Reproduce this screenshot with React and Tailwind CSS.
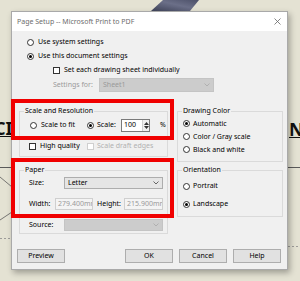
import React from "react";

const Radio = ({ checked }) => (
  <span className="flex h-[7px] w-[7px] shrink-0 items-center justify-center rounded-full border border-[#333] bg-white">
    {checked && <span className="h-[3px] w-[3px] rounded-full bg-black" />}
  </span>
);

const Check = ({ disabled }) => (
  <span
    className={
      "block h-[7px] w-[7px] shrink-0 border bg-white " +
      (disabled ? "border-[#cfcfcf]" : "border-[#333]")
    }
  />
);

const Chevron = ({ color = "#333" }) => (
  <svg width="6" height="4" viewBox="0 0 6 4" className="shrink-0">
    <path d="M0.5 0.5 L3 3 L5.5 0.5" fill="none" stroke={color} strokeWidth="0.8" />
  </svg>
);

const Select = ({ value, width, disabled, height = "h-[12px]" }) => (
  <div
    className={
      "flex items-center justify-between border pl-[3px] pr-[3px] " +
      height +
      " " +
      width +
      " " +
      (disabled ? "border-[#c4c4c4] bg-[#cccccc] text-[#9a9a9a]" : "border-[#adadad] bg-[#e5e5e5] text-black")
    }
  >
    <span>{value}</span>
    <Chevron color={disabled ? "#a8a8a8" : "#444"} />
  </div>
);

const Field = ({ value, width }) => (
  <div
    className={
      "flex h-[12px] items-center overflow-hidden whitespace-nowrap border border-[#cfcfcf] bg-[#f4f4f4] pl-[2px] text-[#9a9a9a] " +
      width
    }
  >
    {value}
  </div>
);

const Group = ({ title, className, children }) => (
  <fieldset className={"border border-[#dadada] " + className}>
    <legend className="ml-[4px] px-[1px] leading-[10px]">{title}</legend>
    {children}
  </fieldset>
);

const Button = ({ children }) => (
  <div className="flex h-[14px] w-[48px] items-center justify-center border border-[#adadad] bg-[#e1e1e1]">
    {children}
  </div>
);

const Backdrop = () => (
  <>
    <svg className="absolute left-0 top-0" width="300" height="281" viewBox="0 0 300 281">
      <defs>
        <linearGradient id="slate" x1="0" y1="1" x2="1" y2="0">
          <stop offset="0" stopColor="#3f4359" />
          <stop offset="0.55" stopColor="#6b6f88" />
          <stop offset="1" stopColor="#4c5068" />
        </linearGradient>
      </defs>
      <polygon points="163,0 199,0 190,11 151,11" fill="url(#slate)" />
      <line x1="0" y1="167.5" x2="12" y2="167.5" stroke="#5a5a5a" strokeWidth="1" />
      <line x1="0" y1="177" x2="12" y2="187" stroke="#5a5a5a" strokeWidth="0.8" />
      <line x1="0" y1="220" x2="12" y2="212" stroke="#5a5a5a" strokeWidth="0.8" />
      <line x1="0" y1="238.5" x2="12" y2="238.5" stroke="#8a8a8a" strokeWidth="0.8" strokeDasharray="2 2" />
      <line x1="288" y1="167.5" x2="300" y2="167.5" stroke="#5a5a5a" strokeWidth="1" />
      <line x1="288" y1="246.5" x2="300" y2="246.5" stroke="#8a8a8a" strokeWidth="0.8" strokeDasharray="2 2" />
    </svg>
    <span className="absolute left-[-6px] top-[117px] text-[18px] font-bold leading-[22px] text-[#111] underline">
      CI
    </span>
    <span className="absolute left-[289px] top-[118px] text-[18px] font-bold leading-[22px] text-[#111] underline">
      N
    </span>
  </>
);

export default function App() {
  return (
    <div
      className="relative h-[281px] w-[300px] overflow-hidden bg-[#e4e2d3] pl-[11px] pt-[11px] text-[7px] leading-[10px] text-black"
      style={{ fontFamily: '"Noto Sans", "Liberation Sans", sans-serif' }}
    >
      <Backdrop />

      <div className="relative flex h-[259px] w-[277px] flex-col border border-[#a9a9a9] bg-[#f0f0f0] shadow-[2px_3px_6px_rgba(0,0,0,0.3)]">
        {/* Title bar */}
        <div className="flex h-[19px] shrink-0 items-center justify-between bg-white pl-[5px] pr-[6px]">
          <span className="text-[#6d6d6d]">Page Setup -- Microsoft Print to PDF</span>
          <svg width="7" height="7" viewBox="0 0 7 7">
            <path d="M0.5 0.5 L6.5 6.5 M6.5 0.5 L0.5 6.5" stroke="#666" strokeWidth="0.8" />
          </svg>
        </div>

        {/* Body */}
        <div className="relative flex-1">
          <div className="pl-[15px] pt-[4px]">
            <div className="flex h-[14px] items-center gap-[4px]">
              <Radio />
              <span>Use system settings</span>
            </div>
            <div className="flex h-[14px] items-center gap-[4px]">
              <Radio checked />
              <span>Use this document settings</span>
            </div>
            <div className="flex h-[14px] items-center gap-[4px] pl-[26px]">
              <Check />
              <span>Set each drawing sheet individually</span>
            </div>
            <div className="mt-[1px] flex h-[14px] items-center pl-[26px]">
              <span className="w-[46px] text-[#9a9a9a]">Settings for:</span>
              <Select value="Sheet1" width="w-[115px]" height="h-[14px]" disabled />
            </div>
          </div>

          <div className="mt-[14px] flex gap-[9px] pl-[7px]">
            {/* Left column */}
            <div className="flex w-[149px] flex-col">
              <Group title="Scale and Resolution" className="h-[51px]">
                <div className="mt-[2px] flex h-[14px] items-center pl-[10px]">
                  <div className="flex w-[57px] items-center gap-[4px]">
                    <Radio />
                    <span>Scale to fit</span>
                  </div>
                  <div className="flex w-[34px] items-center gap-[3px]">
                    <Radio checked />
                    <span>Scale:</span>
                  </div>
                  <div className="flex h-[13px] w-[29px] items-center border border-[#7a7a7a] bg-white">
                    <span className="flex-1 pl-[2px]">100</span>
                    <div className="flex h-full w-[7px] flex-col items-center justify-center gap-[1px] border-l border-[#d0d0d0] bg-[#f0f0f0]">
                      <svg width="5" height="3" viewBox="0 0 5 3">
                        <path d="M0 3 L2.5 0 L5 3 Z" fill="#333" />
                      </svg>
                      <svg width="5" height="3" viewBox="0 0 5 3">
                        <path d="M0 0 L2.5 3 L5 0 Z" fill="#333" />
                      </svg>
                    </div>
                  </div>
                  <span className="ml-[10px]">%</span>
                </div>
                <div className="mt-[7px] flex h-[14px] items-center pl-[9px]">
                  <div className="flex w-[58px] items-center gap-[4px]">
                    <Check />
                    <span>High quality</span>
                  </div>
                  <div className="flex items-center gap-[3px] text-[#b0b0b0]">
                    <Check disabled />
                    <span>Scale draft edges</span>
                  </div>
                </div>
              </Group>

              <Group title="Paper" className="mt-[8px] h-[69px]">
                <div className="mt-[2px] flex h-[12px] items-center pl-[9px]">
                  <span className="w-[35px]">Size:</span>
                  <Select value="Letter" width="w-[99px]" />
                </div>
                <div className="mt-[9px] flex h-[12px] items-center pl-[9px]">
                  <span className="w-[26px]">Width:</span>
                  <Field value="279.400mm" width="w-[38px]" />
                  <span className="ml-[4px] w-[27px]">Height:</span>
                  <Field value="215.900mm" width="w-[39px]" />
                </div>
                <div className="mt-[9px] flex h-[12px] items-center pl-[9px]">
                  <span className="w-[35px]">Source:</span>
                  <Select value="" width="w-[99px]" disabled />
                </div>
              </Group>
            </div>

            {/* Right column */}
            <div className="flex w-[106px] flex-col">
              <Group title="Drawing Color" className="h-[56px]">
                <div className="mt-[1px] pl-[5px]">
                  <div className="flex h-[13px] items-center gap-[3px]">
                    <Radio checked />
                    <span>Automatic</span>
                  </div>
                  <div className="flex h-[13px] items-center gap-[3px]">
                    <Radio />
                    <span>Color / Gray scale</span>
                  </div>
                  <div className="flex h-[13px] items-center gap-[3px]">
                    <Radio />
                    <span>Black and white</span>
                  </div>
                </div>
              </Group>

              <Group title="Orientation" className="mt-[3px] h-[52px]">
                <div className="pl-[5px]">
                  <div className="mt-[4px] flex h-[14px] items-center gap-[3px]">
                    <Radio />
                    <span>Portrait</span>
                  </div>
                  <div className="mt-[4px] flex h-[14px] items-center gap-[3px]">
                    <Radio checked />
                    <span>Landscape</span>
                  </div>
                </div>
              </Group>
            </div>
          </div>

          {/* Buttons */}
          <div className="mt-[15px] flex items-center pl-[5px] pr-[6px]">
            <Button>Preview</Button>
            <div className="ml-auto flex gap-[6px]">
              <Button>OK</Button>
              <Button>Cancel</Button>
              <Button>Help</Button>
            </div>
          </div>

          {/* Annotation frames */}
          <div className="absolute left-[-1px] top-[68px] h-[41px] w-[163px] border-[4px] border-[#f00000]" />
          <div className="absolute left-[-1px] top-[127px] h-[60px] w-[163px] border-[4px] border-[#f00000]" />
        </div>
      </div>
    </div>
  );
}
